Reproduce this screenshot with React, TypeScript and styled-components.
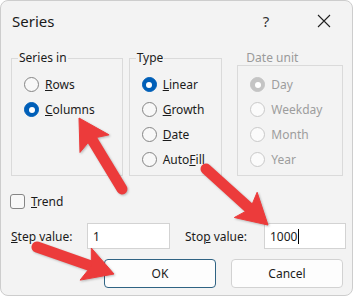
import React from 'react';
import styled, { createGlobalStyle } from 'styled-components';

const GlobalStyle = createGlobalStyle`
  html, body { margin: 0; padding: 0; background: #ffffff; }
  body {
    font-family: "Noto Sans", "Open Sans", sans-serif;
    font-size: 12px;
    color: #1b1b1b;
  }
`;

const Dialog = styled.div`
  position: relative;
  box-sizing: border-box;
  width: 353px;
  height: 296px;
  background: #f3f3f3;
  border: 1px solid #cdcdcd;
  border-radius: 8px;
  overflow: hidden;
`;

const TitleBar = styled.div`
  height: 40px;
  display: flex;
  align-items: center;
  padding: 0 5px 0 11px;
  gap: 12px;
`;

const Title = styled.div`
  flex: 1;
  font-size: 15px;
  color: #1a1a1a;
`;

const TitleButton = styled.div`
  width: 46px;
  height: 40px;
  display: flex;
  align-items: center;
  justify-content: center;
  font-size: 15px;
  color: #333;
`;

const Body = styled.div`
  padding: 9px 9px 0 10px;
`;

const GroupRow = styled.div`
  display: flex;
  align-items: flex-start;
`;

const Group = styled.fieldset<{ $w: number; $gap: number }>`
  box-sizing: border-box;
  width: ${p => p.$w}px;
  height: 126px;
  margin: 0 ${p => p.$gap}px 0 0;
  padding: 0 0 0 6px;
  border: 1px solid #dadada;
  min-width: 0;
`;

const Legend = styled.legend`
  padding: 0 1px;
  font-size: 12px;
  line-height: 16px;
  color: #1b1b1b;
`;

const DetachedGroup = styled.div<{ $w: number }>`
  width: ${p => p.$w}px;
  display: flex;
  flex-direction: column;
`;

const DetachedLabel = styled.div`
  padding-left: 9px;
  font-size: 12px;
  line-height: 16px;
  color: #9a9a9a;
  position: relative;
  z-index: 1;
`;

const DetachedBox = styled.div`
  box-sizing: border-box;
  height: 111px;
  margin-top: -1px;
  border: 1px solid #dadada;
  padding: 6px 0 0 6px;
`;

const RadioList = styled.div<{ $top: number }>`
  display: flex;
  flex-direction: column;
  margin-top: ${p => p.$top}px;
`;

const RadioRow = styled.div<{ $disabled?: boolean }>`
  height: 25px;
  display: flex;
  align-items: center;
  gap: 6px;
  padding-left: 6px;
  font-size: 12px;
  color: ${p => (p.$disabled ? '#9d9d9d' : '#1b1b1b')};
`;

const RadioCircle = styled.span<{ $checked?: boolean; $disabled?: boolean }>`
  box-sizing: border-box;
  width: 15px;
  height: 15px;
  border-radius: 50%;
  flex: none;
  display: flex;
  align-items: center;
  justify-content: center;
  background: ${p =>
    p.$checked ? (p.$disabled ? '#c4c4c4' : '#005fb8') : p.$disabled ? '#fbfbfb' : '#f8f8f8'};
  border: 1px solid
    ${p => (p.$checked ? (p.$disabled ? '#c4c4c4' : '#005fb8') : p.$disabled ? '#c9c9c9' : '#858585')};

  &::after {
    content: '';
    display: ${p => (p.$checked ? 'block' : 'none')};
    width: 6px;
    height: 6px;
    border-radius: 50%;
    background: #ffffff;
  }
`;

const TrendRow = styled.div`
  margin-top: 15px;
  height: 20px;
  display: flex;
  align-items: center;
  gap: 6px;
  font-size: 12px;
`;

const CheckBox = styled.span`
  box-sizing: border-box;
  width: 15px;
  height: 15px;
  margin-left: -1px;
  border: 1px solid #858585;
  border-radius: 3px;
  background: #f8f8f8;
`;

const ValueRow = styled.div`
  margin-top: 12px;
  display: grid;
  grid-template-columns: 76px 83px 15px 79px 82px;
  align-items: center;
  font-size: 12px;
`;

const TextBox = styled.div`
  box-sizing: border-box;
  height: 26px;
  background: #ffffff;
  border: 1px solid #d3d3d3;
  display: flex;
  align-items: center;
  padding-left: 5px;
  font-size: 12px;
  color: #1b1b1b;
`;

const Caret = styled.span`
  display: inline-block;
  width: 1px;
  height: 15px;
  background: #000;
  margin-left: 1px;
`;

const ButtonRow = styled.div`
  margin-top: 10px;
  display: flex;
  justify-content: flex-end;
  gap: 15px;
`;

const Button = styled.div<{ $primary?: boolean }>`
  box-sizing: border-box;
  width: 112px;
  height: 29px;
  display: flex;
  align-items: center;
  justify-content: center;
  background: #fdfdfd;
  border: 1px solid ${p => (p.$primary ? '#2f6383' : '#d2d2d2')};
  border-radius: 4px;
  font-size: 12px;
  color: #1b1b1b;
`;

const Overlay = styled.svg`
  position: absolute;
  left: -1px;
  top: -1px;
  pointer-events: none;
  filter: drop-shadow(1px 1px 1px rgba(0, 0, 0, 0.25));
`;

type ArrowProps = { x1: number; y1: number; x2: number; y2: number };

const Arrow = ({ x1, y1, x2, y2 }: ArrowProps) => {
  const headLen = 30;
  const headW = 34;
  const dx = x2 - x1;
  const dy = y2 - y1;
  const len = Math.hypot(dx, dy);
  const ux = dx / len;
  const uy = dy / len;
  const bx = x2 - ux * headLen;
  const by = y2 - uy * headLen;
  const px = -uy;
  const py = ux;
  const pts = `${x2},${y2} ${bx + (px * headW) / 2},${by + (py * headW) / 2} ${bx + ux * 6},${by + uy * 6} ${bx - (px * headW) / 2},${by - (py * headW) / 2}`;
  return (
    <g fill="#ec3b3b" stroke="#ec3b3b">
      <line x1={x1} y1={y1} x2={bx + ux * 4} y2={by + uy * 4} strokeWidth={11} strokeLinecap="round" />
      <polygon points={pts} strokeWidth={1} strokeLinejoin="round" />
    </g>
  );
};

const Radio = ({ label, checked, disabled }: { label: React.ReactNode; checked?: boolean; disabled?: boolean }) => (
  <RadioRow $disabled={disabled}>
    <RadioCircle $checked={checked} $disabled={disabled} />
    <span>{label}</span>
  </RadioRow>
);

export default function App() {
  return (
    <>
      <GlobalStyle />
      <Dialog>
        <TitleBar>
          <Title>Series</Title>
          <TitleButton>?</TitleButton>
          <TitleButton>
            <svg width="14" height="14" viewBox="0 0 14 14">
              <path d="M1 1 L13 13 M13 1 L1 13" stroke="#222" strokeWidth="1.1" />
            </svg>
          </TitleButton>
        </TitleBar>
        <Body>
          <GroupRow>
            <Group $w={112} $gap={6}>
              <Legend>Series in</Legend>
              <RadioList $top={6}>
                <Radio label={<><u>R</u>ows</>} />
                <Radio label={<><u>C</u>olumns</>} checked />
              </RadioList>
            </Group>
            <Group $w={94} $gap={15}>
              <Legend>Type</Legend>
              <RadioList $top={6}>
                <Radio label={<><u>L</u>inear</>} checked />
                <Radio label={<><u>G</u>rowth</>} />
                <Radio label={<><u>D</u>ate</>} />
                <Radio label={<>Auto<u>F</u>ill</>} />
              </RadioList>
            </Group>
            <DetachedGroup $w={106}>
              <DetachedLabel>Date unit</DetachedLabel>
              <DetachedBox>
                <RadioList $top={0}>
                  <Radio label="Day" checked disabled />
                  <Radio label="Weekday" disabled />
                  <Radio label="Month" disabled />
                  <Radio label="Year" disabled />
                </RadioList>
              </DetachedBox>
            </DetachedGroup>
          </GroupRow>

          <TrendRow>
            <CheckBox />
            <span><u>T</u>rend</span>
          </TrendRow>

          <ValueRow>
            <span><u>S</u>tep value:</span>
            <TextBox>1</TextBox>
            <span />
            <span>Sto<u>p</u> value:</span>
            <TextBox>1000<Caret /></TextBox>
          </ValueRow>

          <ButtonRow>
            <Button $primary>OK</Button>
            <Button>Cancel</Button>
          </ButtonRow>
        </Body>

        <Overlay width="355" height="298" viewBox="0 0 355 298">
          <Arrow x1={122} y1={189} x2={79} y2={118} />
          <Arrow x1={206} y1={169} x2={268} y2={225} />
          <Arrow x1={37} y1={247} x2={114} y2={274} />
        </Overlay>
      </Dialog>
    </>
  );
}
